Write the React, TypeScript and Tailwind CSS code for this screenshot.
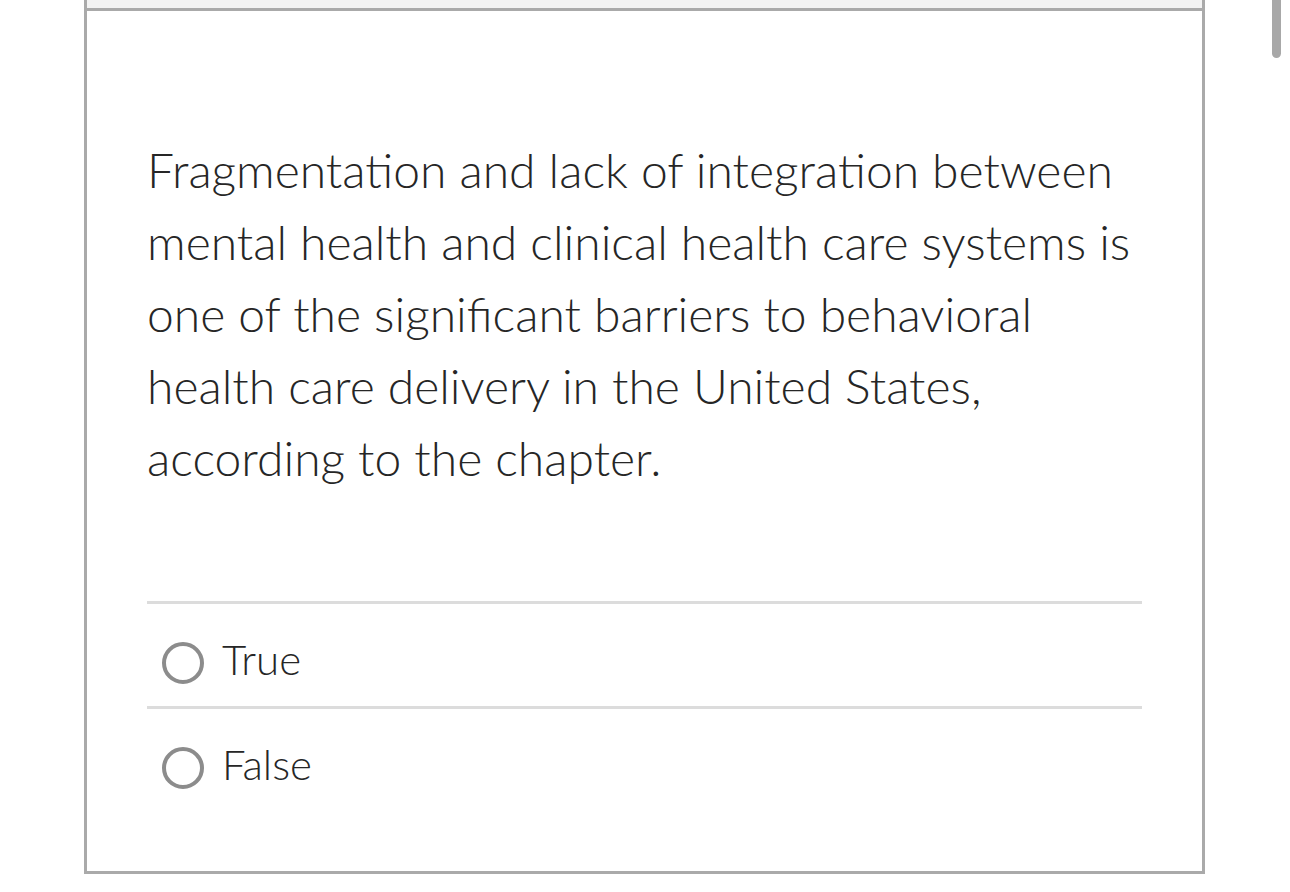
const options = ["True", "False"];

const Radio = ({ label }: { label: string }) => (
  <label className="flex items-center h-[86px] pt-[16px] box-content border-t-[3px] border-[#dcdcdc] pl-[15px]">
    <span className="w-[42px] h-[42px] rounded-full border-[4px] border-[#8c8c8c] shrink-0" />
    <span className="ml-[18px] mb-[8px] text-[42px] font-light text-[#262626]">{label}</span>
  </label>
);

export default function App() {
  return (
    <div className="relative w-[1290px] h-[892px] bg-white overflow-hidden font-['Lato',sans-serif]">
      <div className="ml-[84px] w-[1121px] border-x-[3px] border-b-[3px] border-[#aaaaaa]">
        <div className="h-[8px] bg-[#f3f3f3] border-b-[3px] border-[#aaaaaa] box-content" />
        <div className="px-[60px] pt-[123px] pb-[60px]">
          <p className="text-[48px] font-light leading-[72px] text-[#262626] whitespace-nowrap">
            Fragmentation and lack of integration between<br />
            mental health and clinical health care systems is<br />
            one of the significant barriers to behavioral<br />
            health care delivery in the United States,<br />
            according to the chapter.
          </p>
          <div className="mt-[107px]">
            {options.map((o) => (
              <Radio key={o} label={o} />
            ))}
          </div>
        </div>
      </div>
      <div className="absolute top-0 left-[1272px] w-[9px] h-[58px] rounded-b-full bg-[#a8a8a8]" />
    </div>
  );
}
